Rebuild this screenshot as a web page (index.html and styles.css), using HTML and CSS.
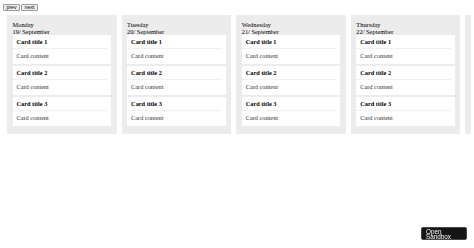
FILE: index.html
```html
<!DOCTYPE html>
<html lang="en">
<head>
    <meta charset="UTF-8">
    <meta name="viewport" content="width=device-width, initial-scale=1.0">
    <title>Week board</title>
    <link rel="stylesheet" href="styles.css">
</head>
<body>

    <div class="nav">
        <button class="nav-btn">prev</button>
        <button class="nav-btn">next</button>
    </div>

    <div class="board">
        <div class="day">
            <div class="day-head">Monday<br>19/ September</div>
            <div class="card"><div class="card-title">Card title 1</div><div class="card-body">Card content</div></div>
            <div class="card"><div class="card-title">Card title 2</div><div class="card-body">Card content</div></div>
            <div class="card"><div class="card-title">Card title 3</div><div class="card-body">Card content</div></div>
        </div>
        <div class="day">
            <div class="day-head">Tuesday<br>20/ September</div>
            <div class="card"><div class="card-title">Card title 1</div><div class="card-body">Card content</div></div>
            <div class="card"><div class="card-title">Card title 2</div><div class="card-body">Card content</div></div>
            <div class="card"><div class="card-title">Card title 3</div><div class="card-body">Card content</div></div>
        </div>
        <div class="day">
            <div class="day-head">Wednesday<br>21/ September</div>
            <div class="card"><div class="card-title">Card title 1</div><div class="card-body">Card content</div></div>
            <div class="card"><div class="card-title">Card title 2</div><div class="card-body">Card content</div></div>
            <div class="card"><div class="card-title">Card title 3</div><div class="card-body">Card content</div></div>
        </div>
        <div class="day">
            <div class="day-head">Thursday<br>22/ September</div>
            <div class="card"><div class="card-title">Card title 1</div><div class="card-body">Card content</div></div>
            <div class="card"><div class="card-title">Card title 2</div><div class="card-body">Card content</div></div>
            <div class="card"><div class="card-title">Card title 3</div><div class="card-body">Card content</div></div>
        </div>
        <div class="day">
            <div class="day-head">Friday<br>23/ September</div>
            <div class="card"><div class="card-title">Card title 1</div><div class="card-body">Card content</div></div>
            <div class="card"><div class="card-title">Card title 2</div><div class="card-body">Card content</div></div>
            <div class="card"><div class="card-title">Card title 3</div><div class="card-body">Card content</div></div>
        </div>
    </div>

    <a class="sandbox-btn">Open<br>Sandbox</a>

</body>
</html>
```

FILE: styles.css
```css
body {
    margin: 0;
    padding: 4px 3px 0 3px;
    font-family: "Liberation Serif", "Times New Roman", serif;
    color: #000;
    background: #fff;
    overflow: hidden;
}

/* prev / next */
.nav {
    display: flex;
    gap: 1px;
    height: 7px;
}

.nav-btn {
    font-family: "Liberation Sans", Arial, sans-serif;
    font-size: 5.3px;
    line-height: 5px;
    height: 7px;
    padding: 0 2.4px;
    margin: 0;
    background: #efefef;
    border: 1px solid #9a9a9a;
    border-radius: 1px;
    color: #000;
}

/* columns */
.board {
    display: flex;
    gap: 5.1px;
    margin-top: 4px;
    padding-left: 4px;
    overflow: hidden;
}

.day {
    flex: 0 0 109.5px;
    box-sizing: border-box;
    background: #ececec;
    padding: 5.5px 5.5px 8.4px;
}

.day-head {
    font-size: 6.4px;
    line-height: 7.4px;
    height: 14.8px;
    white-space: nowrap;
}

.card {
    background: #fff;
    margin-bottom: 2.7px;
}

.card:last-child {
    margin-bottom: 0;
}

.card-title {
    font-size: 6.3px;
    font-weight: bold;
    line-height: 7.4px;
    padding: 3px 4px 2.6px;
    border-bottom: 1px solid #f0f0f0;
    margin-right: 4px;
}

.card-body {
    font-size: 6.3px;
    line-height: 7.4px;
    padding: 3.2px 4px 3.7px;
    color: #333;
}

/* floating button */
.sandbox-btn {
    position: fixed;
    right: 7px;
    bottom: 8px;
    width: 46px;
    height: 13px;
    box-sizing: border-box;
    padding: 0.6px 4px;
    background: #151515;
    border: 1px solid #474747;
    border-radius: 2px;
    color: #fff;
    font-family: "Liberation Sans", Arial, sans-serif;
    font-size: 6.3px;
    line-height: 5.6px;
}
```
